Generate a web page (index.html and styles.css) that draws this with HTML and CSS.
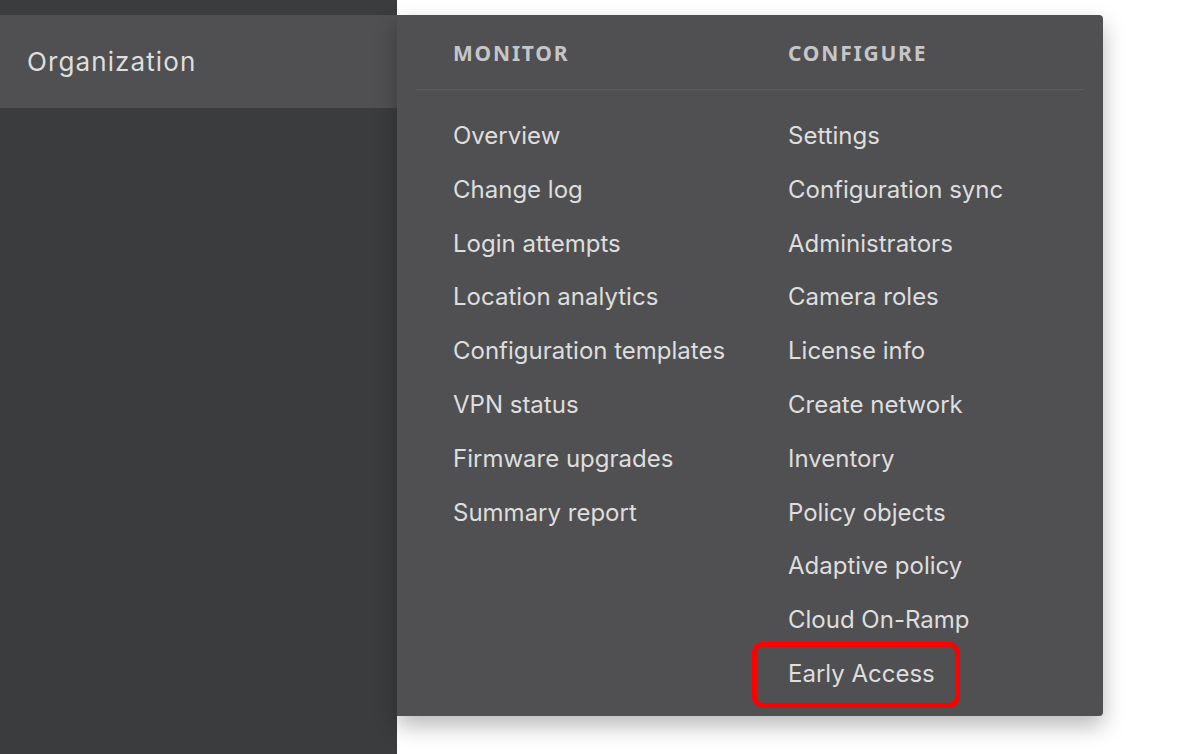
FILE: index.html
```html
<!DOCTYPE html>
<html>
<head>
<meta charset="utf-8">
<link rel="stylesheet" href="styles.css">
</head>
<body>
<div class="page">
  <aside class="sidebar">
    <div class="org-row">Organization</div>
  </aside>
  <main class="content"></main>
  <div class="menu">
    <div class="menu-head">
      <div class="col-title">MONITOR</div>
      <div class="col-title">CONFIGURE</div>
    </div>
    <div class="menu-body">
      <ul class="col">
        <li>Overview</li>
        <li>Change log</li>
        <li>Login attempts</li>
        <li>Location analytics</li>
        <li>Configuration templates</li>
        <li>VPN status</li>
        <li>Firmware upgrades</li>
        <li>Summary report</li>
      </ul>
      <ul class="col">
        <li>Settings</li>
        <li>Configuration sync</li>
        <li>Administrators</li>
        <li>Camera roles</li>
        <li>License info</li>
        <li>Create network</li>
        <li>Inventory</li>
        <li>Policy objects</li>
        <li>Adaptive policy</li>
        <li>Cloud On-Ramp</li>
        <li class="highlight">Early Access</li>
      </ul>
    </div>
  </div>
</div>
</body>
</html>
```

FILE: styles.css
```css
html, body {
  margin: 0;
  padding: 0;
  background: #ffffff;
  font-family: Inter, "Noto Sans", "Liberation Sans", sans-serif;
}
.page {
  position: relative;
  display: flex;
  width: 1200px;
  height: 754px;
  overflow: hidden;
}
.sidebar {
  width: 397px;
  flex: none;
  background: #3b3c3e;
  padding-top: 15px;
  box-sizing: border-box;
}
.org-row {
  height: 93px;
  background: #505052;
  color: #dedede;
  font-size: 26px;
  letter-spacing: 1.1px;
  line-height: 93px;
  padding-left: 27px;
}
.content {
  flex: 1;
  background: #ffffff;
}
.menu {
  position: absolute;
  left: 397px;
  top: 15px;
  width: 706px;
  height: 701px;
  background: #505052;
  border-radius: 0 4px 4px 0;
  box-shadow: 0 10px 22px rgba(0,0,0,0.28);
}
.menu-head {
  display: grid;
  grid-template-columns: 335px 1fr;
  height: 75px;
  margin: 0 19px;
  padding-left: 37px;
  border-bottom: 1px solid #5c5c5e;
  align-items: center;
  box-sizing: border-box;
}
.col-title {
  font-family: "Noto Sans", Inter, sans-serif;
  font-weight: 700;
  font-size: 21px;
  letter-spacing: 1.8px;
  color: #c6c6c8;
  padding-top: 1px;
}
.menu-body {
  display: grid;
  grid-template-columns: 335px 1fr;
  padding: 19px 0 0 56px;
}
.col {
  list-style: none;
  margin: 0;
  padding: 0;
}
.col li {
  height: 53.8px;
  line-height: 53.8px;
  font-size: 24px;
  color: #dedede;
  white-space: nowrap;
}
.col li.highlight {
  position: relative;
}
.col li.highlight::after {
  content: "";
  position: absolute;
  left: -36px;
  top: -5px;
  width: 208px;
  height: 66px;
  border: 5px solid #ff0000;
  border-radius: 11px;
  box-sizing: border-box;
}
```
